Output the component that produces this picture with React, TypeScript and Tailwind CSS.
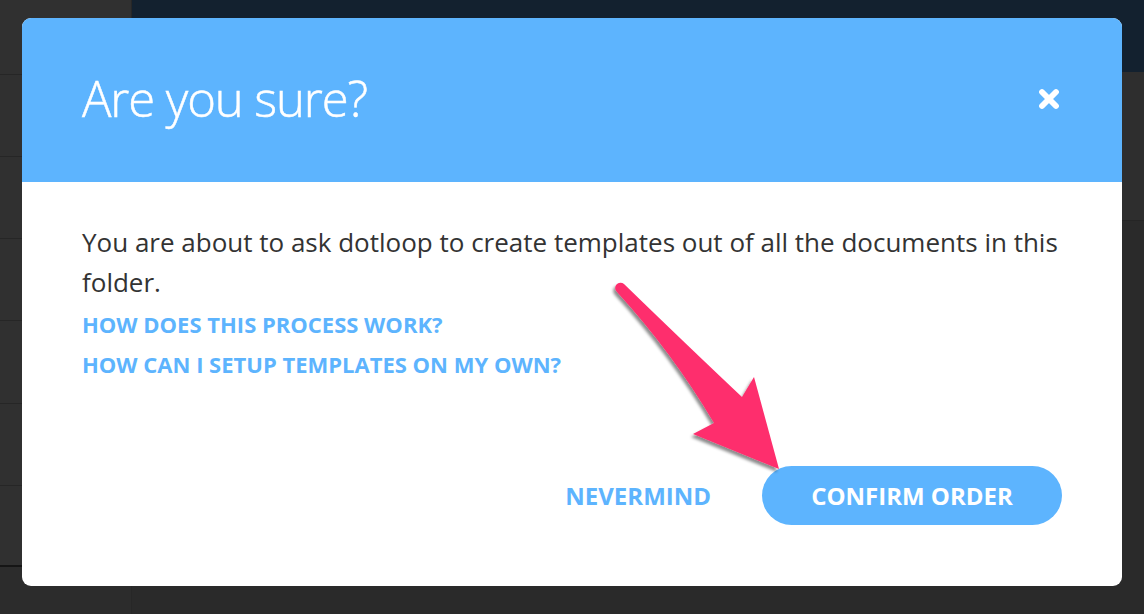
import { X } from 'lucide-react';

const font = { fontFamily: '"Open Sans", "Noto Sans", sans-serif' };

const Sidebar = () => {
  const rows = [75, 82, 82, 82, 83, 82];
  return (
    <aside className="w-[132px] shrink-0 bg-[#303030] border-r border-[#272727] flex flex-col">
      {rows.map((h, i) => (
        <div key={i} className="border-b border-[#262626]" style={{ height: h }} />
      ))}
      <div className="h-[81px] border-b-2 border-[#151515]" />
      <div className="flex-1 bg-[#2c2c2c]" />
    </aside>
  );
};

const Arrow = () => (
  <svg className="absolute inset-0 pointer-events-none" width="1144" height="614" viewBox="0 0 1144 614">
    <defs>
      <filter id="arrowShadow" x="-20%" y="-20%" width="140%" height="140%">
        <feDropShadow dx="-2" dy="3" stdDeviation="1.6" floodColor="#000" floodOpacity="0.45" />
      </filter>
    </defs>
    <path
      d="M 624 284 Q 690 348 742 397 L 754 377 L 779 469 L 693 434 L 714 423 Q 672 352 617 292 A 5 5 0 0 1 624 284 Z"
      fill="#fe2e6d"
      filter="url(#arrowShadow)"
    />
  </svg>
);

const ConfirmModal = () => (
  <div
    className="absolute left-[22px] top-[18px] w-[1100px] h-[568px] rounded-[9px] bg-white overflow-hidden flex flex-col"
    style={font}
  >
    <header className="h-[164px] shrink-0 bg-[#5db4fe] pl-[60px] pr-[60px] flex items-center justify-between">
      <h1 className="text-[49px] font-light text-white tracking-[-1.1px] leading-none -mt-[3px] [-webkit-text-stroke:0.5px_white]">
        Are you sure?
      </h1>
      <button type="button" className="text-white -mr-[1px] -mt-[2px]" title="Close">
        <X className="w-[28px] h-[28px]" strokeWidth={5} />
      </button>
    </header>
    <div className="flex-1 flex flex-col px-[60px] pt-[40px] pb-[61px]">
      <p className="text-[26px] leading-[40px] text-[#333333]">
        You are about to ask dotloop to create templates out of all the documents in this folder.
      </p>
      <div className="mt-[2px] flex flex-col items-start">
        <a className="text-[22px] leading-[40px] font-bold text-[#5db4fe] uppercase">How does this process work?</a>
        <a className="text-[22px] leading-[40px] font-bold text-[#5db4fe] uppercase">How can I setup templates on my own?</a>
      </div>
      <div className="mt-auto flex items-center justify-end gap-[51px]">
        <button type="button" className="text-[24px] font-bold text-[#5db4fe] uppercase">
          Nevermind
        </button>
        <button
          type="button"
          className="w-[300px] h-[59px] rounded-full bg-[#5db4fe] text-white text-[24px] font-bold uppercase"
        >
          Confirm order
        </button>
      </div>
    </div>
  </div>
);

export default function App() {
  return (
    <div className="relative w-[1144px] h-[614px] overflow-hidden bg-[#262626] flex">
      <Sidebar />
      <main className="flex-1 flex flex-col">
        <div className="h-[72px] bg-[#13212f]" />
        <div className="h-[149px] bg-[#2e2e2e] border-b border-[#252525]" />
        <div className="flex-1 bg-[#2a2a2a]" />
      </main>
      <ConfirmModal />
      <Arrow />
    </div>
  );
}
